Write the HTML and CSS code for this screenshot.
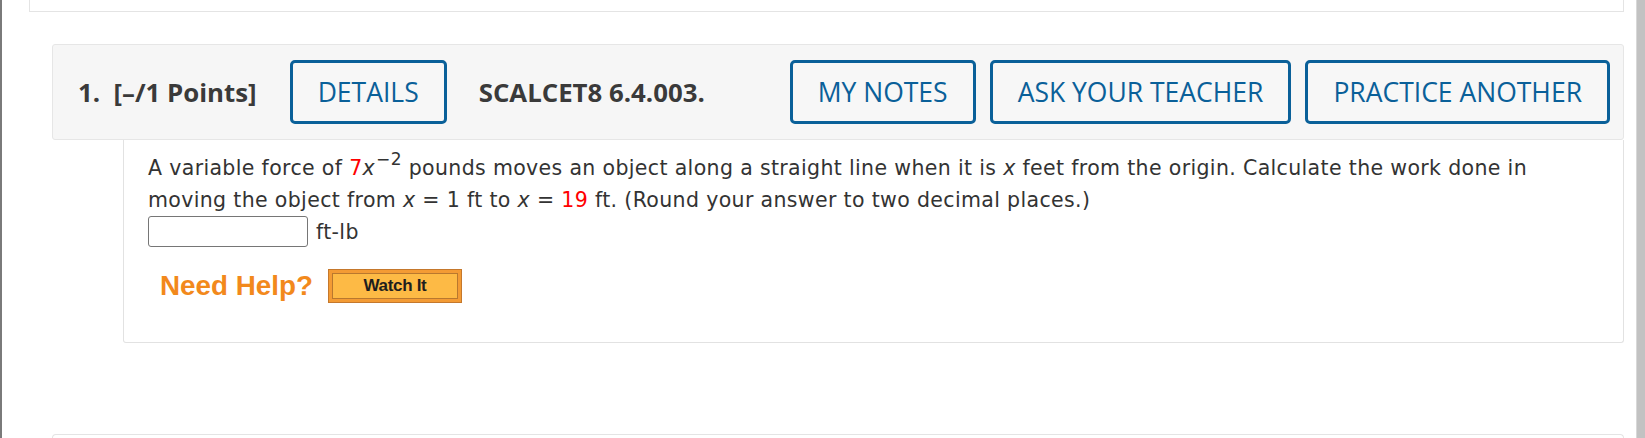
FILE: index.html
```html
<!DOCTYPE html>
<html>
<head>
<meta charset="utf-8">
<link rel="stylesheet" href="styles.css">
</head>
<body>
<div class="page">
  <div class="edge"></div>
  <main class="main">
    <div class="prev-card"></div>
    <section class="question">
      <header class="q-head">
        <div class="q-title">1.&nbsp; [–/1 Points]</div>
        <button class="btn">DETAILS</button>
        <div class="q-ref">SCALCET8 6.4.003.</div>
        <div class="q-actions">
          <button class="btn">MY NOTES</button>
          <button class="btn">ASK YOUR TEACHER</button>
          <button class="btn">PRACTICE ANOTHER</button>
        </div>
      </header>
      <div class="q-body">
        <p class="q-text">A variable force of <span class="red">7</span><i>x</i><sup>−2</sup> pounds moves an object along a straight line when it is <i>x</i> feet from the origin. Calculate the work done in moving the object from <i>x</i> = 1 ft to <i>x</i> = <span class="red">19</span> ft. (Round your answer to two decimal places.)</p>
        <div class="answer"><span class="input"></span><span class="unit">ft-lb</span></div>
        <div class="help">
          <span class="need">Need Help?</span>
          <span class="watch"><span class="watch-in">Watch It</span></span>
        </div>
      </div>
    </section>
    <div class="next-card"></div>
  </main>
  <div class="scrollbar"></div>
</div>
</body>
</html>
```

FILE: styles.css
```css
html, body {
  margin: 0;
  padding: 0;
  background: #ffffff;
  height: 100%;
  overflow: hidden;
}

.page {
  display: flex;
  height: 438px;
}

.edge {
  width: 2px;
  flex: none;
  background: #7a7a7a;
}

.main {
  flex: 1;
  display: flex;
  flex-direction: column;
  min-width: 0;
}

.scrollbar {
  width: 8px;
  flex: none;
  background: #c2c2c2;
  border-left: 1px solid #d8d8d8;
}

.prev-card {
  height: 11px;
  margin-left: 27px;
  margin-right: 12px;
  border: 1px solid #e4e4e4;
  border-top: none;
  flex: none;
}

.question {
  margin-top: 32px;
  margin-left: 50px;
  margin-right: 12px;
  display: flex;
  flex-direction: column;
}

.q-head {
  height: 94px;
  background: #f6f6f6;
  border: 1px solid #e6e6e6;
  border-radius: 3px;
  display: flex;
  align-items: center;
  padding: 0 13px 0 25px;
  font-family: "Open Sans", sans-serif;
}

.q-title {
  font-weight: 700;
  font-size: 25.8px;
  color: #3a3a3a;
  margin-right: 33px;
  white-space: nowrap;
}

.q-ref {
  font-weight: 700;
  font-size: 25.8px;
  color: #3a3a3a;
  margin-left: 32px;
  white-space: nowrap;
}

.q-actions {
  margin-left: auto;
  display: flex;
  gap: 14px;
}

.btn {
  font-family: "Open Sans", sans-serif;
  font-size: 26.5px;
  color: #0a6099;
  background: #f7f7f7;
  border: 3px solid #0a6099;
  border-radius: 5px;
  height: 64px;
  padding: 0 25px;
  white-space: nowrap;
}

.q-body {
  margin-left: 71px;
  height: 202px;
  border: 1px solid #e2e2e2;
  border-top: none;
  border-radius: 0 0 3px 3px;
  padding: 0 24px;
  font-family: "DejaVu Sans", Verdana, sans-serif;
  color: #333333;
}

.q-text {
  margin: 12px 0 0 0;
  font-size: 20.5px;
  letter-spacing: 0.35px;
  line-height: 32px;
  max-width: 1410px;
}

.q-text sup {
  font-size: 17px;
  line-height: 0;
  vertical-align: 0;
  position: relative;
  top: -10px;
  margin-left: 1px;
}

.red {
  color: #ff0000;
}

.answer {
  display: flex;
  align-items: center;
  margin-top: 0;
}

.input {
  width: 158px;
  height: 29px;
  border: 1.5px solid #767676;
  border-radius: 3px;
  background: #ffffff;
}

.unit {
  font-size: 20.5px;
  letter-spacing: 0.35px;
  margin-left: 8px;
}

.help {
  display: flex;
  align-items: center;
  margin-top: 22px;
  margin-left: 12px;
}

.need {
  font-family: "Liberation Sans", Arial, sans-serif;
  font-weight: 700;
  font-size: 27.8px;
  color: #f2891c;
  margin-right: 15px;
}

.watch {
  display: inline-flex;
  padding: 3px;
  background: #f39b34;
  border: 1px solid #c5782c;
}

.watch-in {
  display: inline-flex;
  align-items: center;
  justify-content: center;
  width: 124px;
  height: 24px;
  background: #fdba45;
  border: 1px solid #b9782e;
  font-family: "Liberation Sans", Arial, sans-serif;
  font-weight: 700;
  font-size: 17px;
  color: #1e1e1e;
  letter-spacing: -0.3px;
}

.next-card {
  margin-top: auto;
  margin-left: 50px;
  margin-right: 12px;
  height: 3px;
  border: 1px solid #e4e4e4;
  border-bottom: none;
  border-radius: 4px 4px 0 0;
  flex: none;
}
```
